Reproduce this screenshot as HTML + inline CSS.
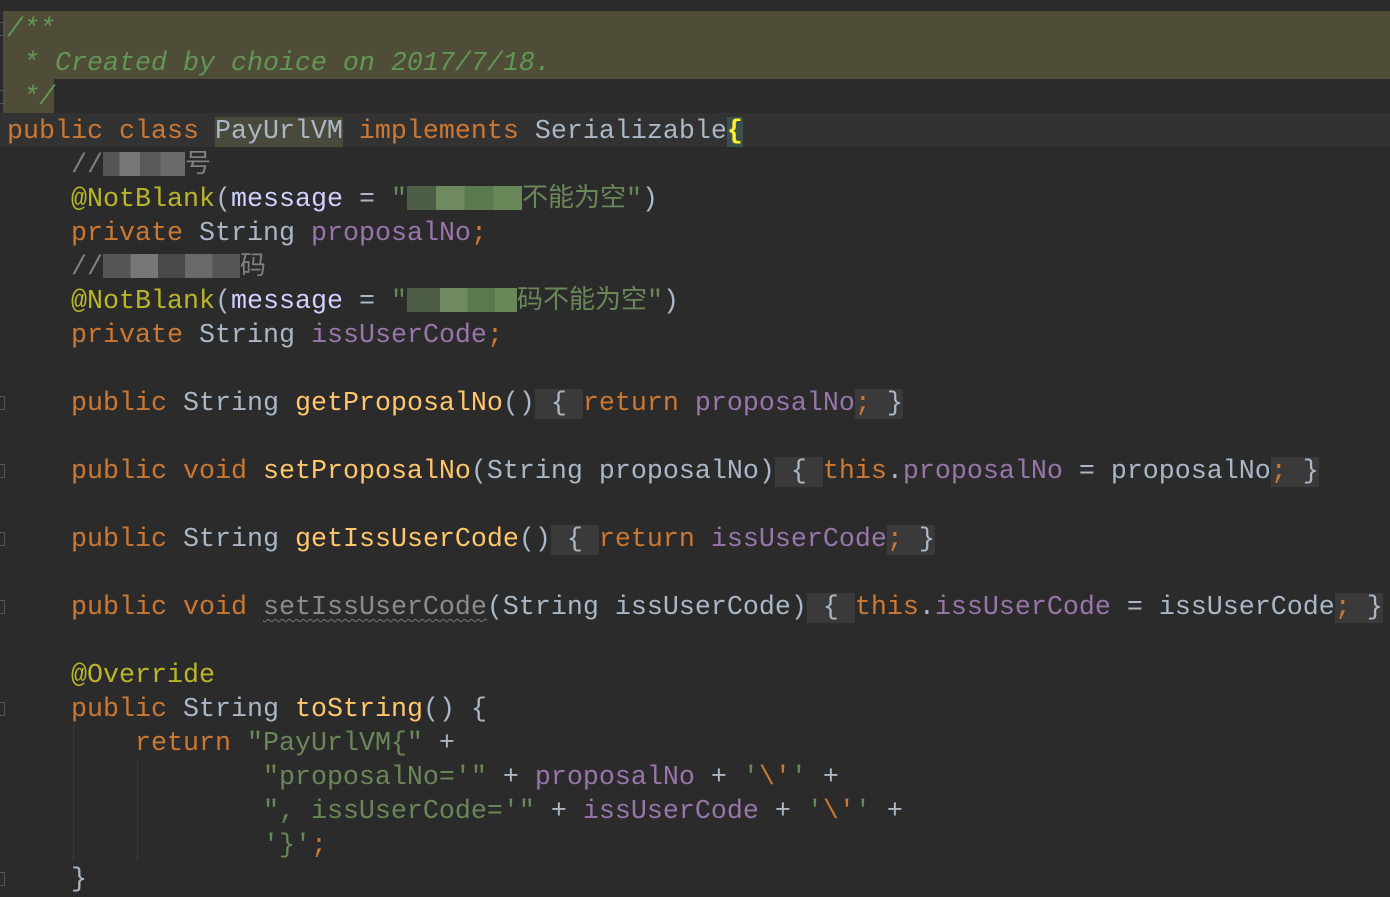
<!DOCTYPE html>
<html><head><meta charset="utf-8"><style>
html,body{margin:0;padding:0;}
body{width:1390px;height:896px;background:#2b2b2b;overflow:hidden;position:relative;
font-family:"Liberation Mono","Noto Sans CJK SC",monospace;font-size:26.67px;color:#a9b7c6;}
.l{position:absolute;left:7px;height:34px;line-height:34px;white-space:pre;}
.k{color:#cc7832}.s{color:#6a8759}.c{color:#629755;font-style:italic}.f{color:#9876aa}
.m{color:#ffc66d}.a{color:#bbb529}.g{color:#808080}
.cj{font-family:"Noto Sans CJK SC",sans-serif;font-size:26px;line-height:20px;display:inline-block;vertical-align:baseline;}
.fd{background:#3a3a3a}
.b{display:inline-block;height:24px;vertical-align:-4px;}
.band{position:absolute;background:#4f4d38;}
.fold{position:absolute;left:0;width:4px;height:12px;border:1px solid #555;border-left:none;}
.guide{position:absolute;width:1px;background:#3a3a3a;}
</style></head><body>
<div class="band" style="left:3px;top:11px;width:1387px;height:68px"></div>
<div class="band" style="left:3px;top:79px;width:51px;height:34px"></div>
<div style="position:absolute;left:0;top:113px;width:1390px;height:34px;background:#323232"></div>
<div class="guide" style="left:73px;top:725px;height:136px"></div>
<div class="guide" style="left:137px;top:759px;height:102px"></div>
<div class="fold" style="top:22px"></div>
<div class="fold" style="top:90px"></div>
<div class="fold" style="top:396px"></div>
<div class="fold" style="top:464px"></div>
<div class="fold" style="top:532px"></div>
<div class="fold" style="top:600px"></div>
<div class="fold" style="top:702px"></div>
<div class="fold" style="top:872px"></div>

<div class="l c" style="top:13px">/**</div>
<div class="l c" style="top:47px"> * Created by choice on 2017/7/18.</div>
<div class="l c" style="top:81px"> */</div>
<div class="l" style="top:115px"><span class="k">public class </span><span style="background:#4a4a3c">PayUrlVM</span><span class="k"> implements </span>Serializable<span style="background:#3b514d;color:#ffef28;font-weight:bold">{</span></div>
<div class="l g" style="top:149px">    //<span class="b" style="width:82px;background:linear-gradient(90deg,#555 0 20%,#777 20% 45%,#5a5a5a 45% 70%,#6a6a6a 70%)"></span><span class="cj">号</span></div>
<div class="l" style="top:183px">    <span class="a">@NotBlank</span>(<span style="color:#d0d0ff">message</span> = <span class="s">"<span class="b" style="width:115px;background:linear-gradient(90deg,#4d5d46 0 25%,#6f8a5f 25% 50%,#587a4e 50% 75%,#6a8759 75%)"></span><span class="cj">不能为空</span>"</span>)</div>
<div class="l" style="top:217px">    <span class="k">private </span>String <span class="f">proposalNo</span><span class="k">;</span></div>
<div class="l g" style="top:251px">    //<span class="b" style="width:137px;background:linear-gradient(90deg,#555 0 20%,#777 20% 40%,#4a4a4a 40% 60%,#6a6a6a 60% 80%,#555 80%)"></span><span class="cj">码</span></div>
<div class="l" style="top:285px">    <span class="a">@NotBlank</span>(<span style="color:#d0d0ff">message</span> = <span class="s">"<span class="b" style="width:110px;background:linear-gradient(90deg,#4d5d46 0 30%,#6f8a5f 30% 55%,#587a4e 55% 80%,#6a8759 80%)"></span><span class="cj">码不能为空</span>"</span>)</div>
<div class="l" style="top:319px">    <span class="k">private </span>String <span class="f">issUserCode</span><span class="k">;</span></div>
<div class="l" style="top:387px">    <span class="k">public </span>String <span class="m">getProposalNo</span>()<span class="fd"> { </span><span class="k">return </span><span class="f">proposalNo</span><span class="fd"><span class="k">;</span> }</span></div>
<div class="l" style="top:455px">    <span class="k">public void </span><span class="m">setProposalNo</span>(String proposalNo)<span class="fd"> { </span><span class="k">this</span>.<span class="f">proposalNo</span> = proposalNo<span class="fd"><span class="k">;</span> }</span></div>
<div class="l" style="top:523px">    <span class="k">public </span>String <span class="m">getIssUserCode</span>()<span class="fd"> { </span><span class="k">return </span><span class="f">issUserCode</span><span class="fd"><span class="k">;</span> }</span></div>
<div class="l" style="top:591px">    <span class="k">public void </span><span style="color:#8c8c8c;text-decoration:underline wavy #777;text-decoration-thickness:1px;text-underline-offset:4px">setIssUserCode</span>(String issUserCode)<span class="fd"> { </span><span class="k">this</span>.<span class="f">issUserCode</span> = issUserCode<span class="fd"><span class="k">;</span> }</span></div>
<div class="l a" style="top:659px">    @Override</div>
<div class="l" style="top:693px">    <span class="k">public </span>String <span class="m">toString</span>() {</div>
<div class="l" style="top:727px">        <span class="k">return </span><span class="s">"PayUrlVM{"</span> +</div>
<div class="l" style="top:761px">                <span class="s">"proposalNo='"</span> + <span class="f">proposalNo</span> + <span class="s">'<span class="k">\'</span>'</span> +</div>
<div class="l" style="top:795px">                <span class="s">", issUserCode='"</span> + <span class="f">issUserCode</span> + <span class="s">'<span class="k">\'</span>'</span> +</div>
<div class="l" style="top:829px">                <span class="s">'}'</span><span class="k">;</span></div>
<div class="l" style="top:863px">    }</div>
</body></html>
